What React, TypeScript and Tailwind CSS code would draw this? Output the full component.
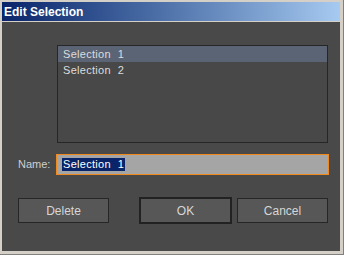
import React from 'react';

const items = ['Selection  1', 'Selection  2'];

const App: React.FC = () => {
  return (
    <div
      className="w-[344px] h-[255px] bg-[#d4d0c8] pl-[2px] pt-[2px] pr-[3px] pb-[3px] border-r border-b border-[#808080] flex flex-col text-[11px] leading-none"
      style={{ fontFamily: '"Liberation Sans", Arial, sans-serif' }}
    >
      <div className="h-[19px] flex items-center pl-[2px] bg-gradient-to-r from-[#0a246a] to-[#a6caf0] text-white font-bold text-[12px]">
        Edit Selection
      </div>
      <div className="h-px bg-[#d4d0c8]" />
      <div className="flex-1 bg-[#494949] flex flex-col">
        <div className="ml-[55px] mt-[23px] w-[271px] h-[98px] border border-[#262626] bg-[#484848]">
          {items.map((s, i) => (
            <div
              key={s}
              className={`h-[16px] pl-[5px] flex items-center whitespace-pre tracking-[0.3px] text-[#dcdcdc] ${
                i === 0 ? 'bg-[#5b6474]' : ''
              }`}
            >
              {s}
            </div>
          ))}
        </div>

        <div className="mt-[11px] flex items-center">
          <span className="ml-[16px] w-[38px] text-[#cfcfcf]">Name:</span>
          <div className="w-[273px] h-[21px] border border-[#f08a1e] bg-[#a5a5a5] flex items-center pl-[5px]">
            <span className="bg-[#0a246a] text-white whitespace-pre tracking-[0.3px] h-[13px] flex items-center px-px">
              Selection  1
            </span>
          </div>
        </div>

        <div className="mt-[23px] flex items-start">
          <button className="ml-[16px] w-[91px] h-[25px] border border-[#262626] bg-[#575757] text-[#d6d6d6] text-[12px]">
            Delete
          </button>
          <button className="ml-[30px] -mt-px w-[93px] h-[27px] border-2 border-[#222222] bg-[#575757] text-[#d6d6d6] text-[12px]">
            OK
          </button>
          <button className="ml-[5px] w-[91px] h-[25px] border border-[#262626] bg-[#575757] text-[#d6d6d6] text-[12px]">
            Cancel
          </button>
        </div>
      </div>
    </div>
  );
};

export default App;
